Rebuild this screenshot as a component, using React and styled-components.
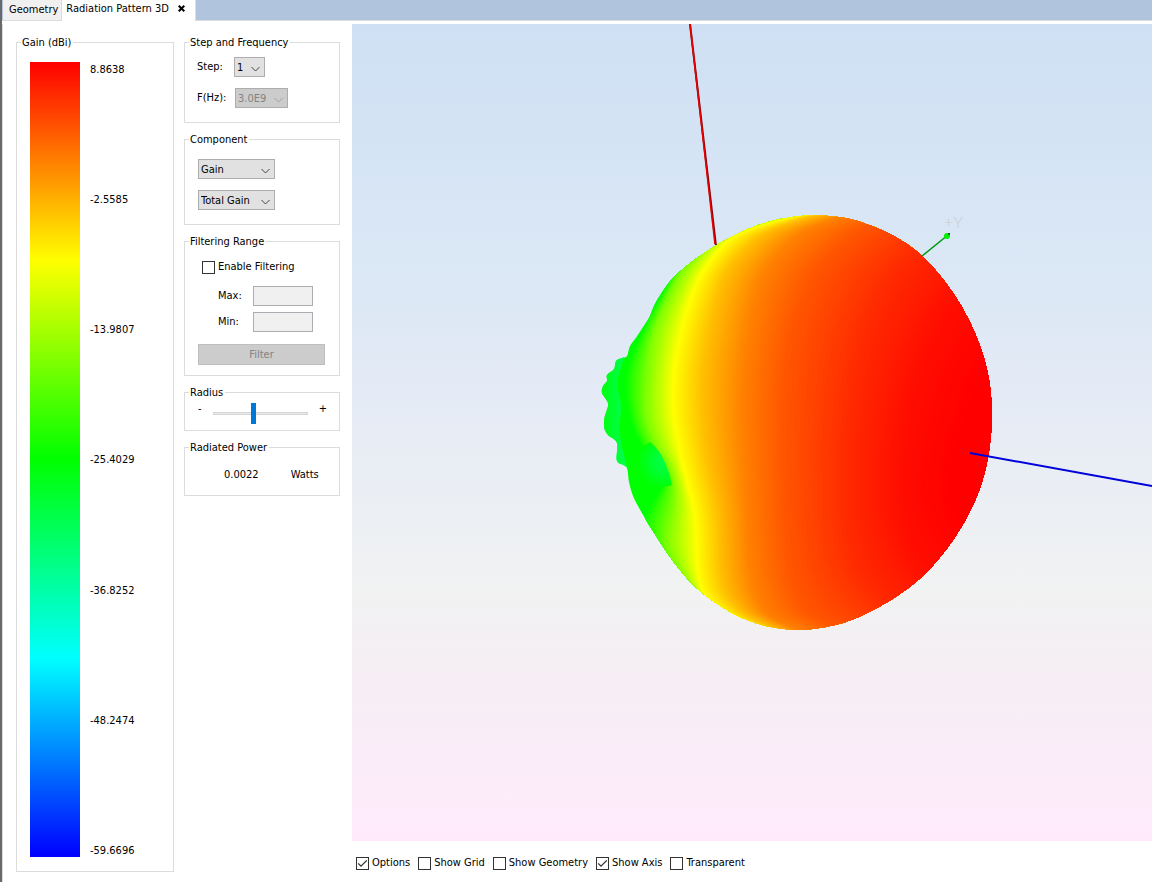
import React, { useState } from 'react';
import styled, { createGlobalStyle } from 'styled-components';

const GlobalStyle = createGlobalStyle`
* { box-sizing: border-box; }
body {
    margin: 0;
    background: #fff;
    color: #000;
}
body, button, input, select {
    font-family: "DejaVu Sans Condensed", "DejaVu Sans", Tahoma, sans-serif;
    font-stretch: condensed;
    font-size: 11px;
    line-height: 16px;
}
`;

const Window = styled.div`
display: flex;
flex-direction: column;
min-height: 100vh;
border-left: 2px solid #696969;
`;
const TabBar = styled.div`
display: flex;
height: 21px;
padding-left: 1px;
background: #b0c4de;
border-bottom: 1px solid #dcdcdc;
`;
const Tab = styled.button`
display: flex;
align-items: center;
gap: 9px;
height: ${props => props.$active ? '21px' : '20px'};
padding: ${props => props.$active ? '0 10px 4px 4px' : '0 3px 1px 6px'};
border: 0;
border-right: 1px solid #dcdcdc;
background: ${props => props.$active ? '#fff' : '#f0f0f0'};
color: #000;
white-space: nowrap;
`;
const Main = styled.main`
display: grid;
grid-template-columns: 158px 166px 1fr;
flex: 1;
padding-left: 13px;
border-left: 1px solid #dcdcdc;
margin-top: 3px;
`;
const Column = styled.div`
display: flex;
flex-direction: column;
gap: 9px;
padding: 11px 0 10px;
margin-left: ${props => props.$indent || 0}px;
`;

const Group = styled.fieldset`
display: flex;
flex-direction: column;
min-width: 0;
margin: 0;
padding: 0 12px;
border: 1px solid #dcdcdc;
flex: ${props => props.$grow ? 1 : 'none'};
`;
const GroupTitle = styled.legend`
height: 14px;
margin-left: -8px;
padding: 0 2px 0 1px;
white-space: nowrap;
`;
const Stack = styled.div`
display: flex;
flex-direction: column;
align-items: flex-start;
gap: ${props => props.$gap}px;
padding: ${props => props.$pad};
`;

const Scale = styled.div`
display: flex;
flex: 1;
height: 100%;
gap: 10px;
padding: 13px 0 14px;
`;
const ScaleBar = styled.div`
width: 50px;
margin-left: 1px;
background: linear-gradient(#f00, #ff0 25%, #0f0 50%, #0ff 75%, #00f);
`;
const ScaleLabels = styled.div`
display: flex;
flex-direction: column;
justify-content: space-between;
margin-bottom: -2px;
`;

const Field = styled.label`
display: grid;
grid-template-columns: ${props => props.$label || 37}px auto;
align-items: center;
`;
const SelectBox = styled.span`
display: inline-grid;
width: ${props => props.$width}px;
height: 20px;
align-items: center;
> * {
    grid-area: 1 / 1;
}
svg {
    justify-self: end;
    margin: 3px 5px 0 0;
    pointer-events: none;
}
`;
const NativeSelect = styled.select`
appearance: none;
width: 100%;
height: 20px;
padding: 1px 0 0 2px;
border: 1px solid #adadad;
border-radius: 0;
background: #e1e1e1;
color: #000;
&:disabled {
    background: #ccc;
    color: #838383;
    opacity: 1;
}
`;
const TextBox = styled.input`
width: 60px;
height: 20px;
padding: 0 3px;
border: 1px solid #abadb3;
background: #f0f0f0;
`;
const FilterButton = styled.button`
width: 127px;
height: 21px;
padding: 0;
border: 1px solid #bfbfbf;
background: #ccc;
color: #838383;
`;

const CheckLabel = styled.label`
display: inline-flex;
align-items: center;
gap: 3px;
height: 14px;
white-space: nowrap;
`;
const CheckBox = styled.span`
display: grid;
place-items: center;
width: 13px;
height: 13px;
> * {
    grid-area: 1 / 1;
}
svg {
    pointer-events: none;
}
`;
const NativeCheck = styled.input`
appearance: none;
width: 13px;
height: 13px;
margin: 0;
border: 1px solid #333;
background: #fff;
`;

const SliderRow = styled.div`
display: flex;
align-items: flex-start;
justify-content: space-between;
height: 31px;
padding: 2px 0 0 1px;
`;
const Slider = styled.input`
appearance: none;
width: 95px;
height: 21px;
margin: 2px 0 0;
background: transparent;
&::-webkit-slider-runnable-track {
    height: 3px;
    border: 1px solid #d6d6d6;
    background: #e7eaea;
}
&::-webkit-slider-thumb {
    appearance: none;
    width: 5px;
    height: 21px;
    margin-top: -10px;
    background: #0078d7;
}
`;
const PowerRow = styled.div`
display: flex;
gap: 32px;
padding: 13px 0 12px 27px;
`;

const ViewColumn = styled.section`
display: flex;
flex-direction: column;
margin-left: 12px;
min-width: 0;
`;
const Viewport = styled.div`
display: flex;
flex: 1;
min-height: 400px;
background: linear-gradient(#cfe0f4, #dce8f5 33%, #e3eaf6 43%, #f1f2f2 69%, #f4eff3 77%, #ffeafc);
svg {
    flex: 1;
    width: 100%;
    min-width: 0;
}
`;
const OptionsBar = styled.div`
display: flex;
align-items: center;
gap: 8px;
height: 41px;
padding: 3px 4px 0;
`;

function Chevron({ disabled }) {
    return (
        <svg width="9" height="6" viewBox="0 0 9 6" fill="none" stroke={disabled ? '#a0a0a0' : '#444'}>
            <path d="M.5 1 4.5 5 8.5 1" />
        </svg>
    );
}

function Select({ options, width, ...rest }) {
    return (
        <SelectBox $width={width}>
            <NativeSelect {...rest}>
                {options.map(o => <option key={o}>{o}</option>)}
            </NativeSelect>
            <Chevron disabled={rest.disabled} />
        </SelectBox>
    );
}

function Check({ label, initial = false }) {
    const [on, setOn] = useState(initial);
    return (
        <CheckLabel>
            <CheckBox>
                <NativeCheck type="checkbox" checked={on} onChange={e => setOn(e.target.checked)} />
                {on && (
                    <svg width="11" height="11" viewBox="0 0 11 11" fill="none" stroke="#333" strokeWidth="1.3">
                        <path d="M1.2 5.4 4 8.2 9.8 2.4" />
                    </svg>
                )}
            </CheckBox>
            {label}
        </CheckLabel>
    );
}

// outline of the lobe in scene units
const OUTLINE = [
    [444.7, 192.6], [421, 196.7], [401, 203], [382, 211.5], [363, 222], [345, 234], [331, 245],
    [319.7, 255.5], [309.7, 268.5], [302, 281.5], [297.3, 293.5], [291, 303], [284.5, 313], [278, 322],
    [275, 332], [270, 334], [264, 337], [262, 345], [255, 351], [255, 357], [251, 362], [250, 369],
    [255, 377], [256, 382], [252.5, 394], [252.3, 404], [256, 411], [265, 419], [265, 437],
    [274.5, 443.3], [277, 458], [281.3, 472.7], [288.5, 486.5], [298, 502.5], [309, 519.5],
    [321.5, 537.8], [334.5, 553.7], [348.5, 567.3], [366, 580.5], [385, 591.5], [405, 599.5],
    [425, 604], [445, 605.7], [463, 604.8], [482, 601.3], [501.3, 595.2], [521.3, 586],
    [542, 574], [562, 559.5], [580.5, 542], [598, 520.3], [613, 496.7], [624, 474.3], [631.5, 452.7],
    [636.3, 431.5], [639, 410], [640, 392], [639, 373], [637, 356], [633, 338], [627.5, 320.5],
    [619.7, 302], [609.7, 282.7], [597.5, 264], [584, 246.8], [570, 232], [556, 220.7], [539, 210.5],
    [520, 202], [500, 195.5], [480, 192.3], [462, 191.8],
];

// x of each iso-gain line at the heights in ROWS, keyed by hue
const ROWS = [190, 200, 215, 245, 275, 310, 350, 390, 420, 440, 460, 480, 500, 520, 545, 570, 590, 606];
const CONTOURS = [
    [120, [370, 360, 345, 323, 306, 288, 273, 276, 288, 307, 310, 298, 290, 296, 311, 330, 350, 380]],
    [90, [425, 392, 360, 331, 315, 301, 295, 294, 303, 315, 321, 321, 317, 315, 325, 342, 362, 392]],
    [60, [455, 414, 378, 352, 338, 328, 321, 321, 326, 330, 335, 340, 343, 344, 345, 352, 375, 410]],
    [45, [468, 434, 403, 376, 364, 356, 350, 350, 353, 356, 360, 364, 366, 367, 368, 374, 392, 425]],
    [30, [500, 468, 441, 415, 403, 396, 391, 390, 391, 392, 393, 394, 395, 396, 398, 404, 415, 445]],
    [20, [560, 522, 495, 464, 449, 438, 432, 430, 430, 430, 431, 431, 432, 434, 437, 444, 458, 490]],
    [10, [620, 600, 575, 542, 523, 509, 500, 495, 492, 492, 492, 492, 493, 496, 503, 520, 545, 575]],
    [3, [700, 680, 660, 630, 604, 582, 565, 555, 551, 549, 548, 549, 552, 559, 574, 600, 625, 650]],
    [0, [760, 745, 730, 710, 690, 655, 628, 614, 604, 600, 597, 600, 610, 625, 650, 680, 705, 720]],
];

function spline(points, closed) {
    const n = points.length;
    const at = i => closed ? points[(i + n) % n] : points[Math.max(0, Math.min(n - 1, i))];
    let d = '';
    for (let i = 0; i < (closed ? n : n - 1); i++) {
        const [a, b, c, e] = [at(i - 1), at(i), at(i + 1), at(i + 2)];
        d += `C${b[0] + (c[0] - a[0]) / 6} ${b[1] + (c[1] - a[1]) / 6} ${c[0] - (e[0] - b[0]) / 6} ${c[1] - (e[1] - b[1]) / 6} ${c[0]} ${c[1]}`;
    }
    return `M${points[0].join(' ')}${d}`;
}

function hueColor(h) {
    return h > 60
        ? `rgb(${Math.round((120 - h) * 4.25)},255,0)`
        : `rgb(255,${Math.round(h * 4.25)},0)`;
}

const BANDS = CONTOURS.slice(1).flatMap(([hue, xs], k) => {
    const [prevHue, prevXs] = CONTOURS[k];
    const steps = prevHue - hue > 12 ? 24 : 14;
    return Array.from({ length: steps }, (_, s) => {
        const t = (s + 1) / steps;
        const line = xs.map((x, i) => [prevXs[i] + (x - prevXs[i]) * t, ROWS[i]]);
        return { d: `${spline(line)}H800V190Z`, fill: hueColor(prevHue + (hue - prevHue) * t) };
    });
});

function RadiationPattern() {
    return (
        <svg viewBox="0 0 800 817" preserveAspectRatio="xMidYMid slice" role="img" aria-label="3D radiation pattern">
            <defs>
                <clipPath id="lobe"><path d={`${spline(OUTLINE, true)}Z`} /></clipPath>
                <linearGradient id="back" gradientUnits="userSpaceOnUse" x1="252" y1="0" x2="270" y2="0">
                    <stop offset="0" stopColor="#00ff14" />
                    <stop offset="1" stopColor="#00ff46" />
                </linearGradient>
                <radialGradient id="dip" gradientUnits="userSpaceOnUse" cx="312" cy="438" r="27">
                    <stop offset="0" stopColor="#00ff46" />
                    <stop offset=".35" stopColor="#00ff38" />
                    <stop offset="1" stopColor="#00ff00" />
                </radialGradient>
            </defs>
            <path d="M338 0 364 222" stroke="#7a0000" strokeWidth="2" />
            <path d="M338 0 363 220" stroke="#e80000" strokeWidth="1.6" />
            <path d="M570 232 596 211" stroke="#009a14" strokeWidth="1.6" />
            <circle cx="595" cy="212" r="3" fill="#00f000" />
            <path d="M596 210h2" stroke="#063" strokeWidth="2" />
            <text x="592" y="204" fill="#c8cbce" fontSize="16" fontFamily="Lato, sans-serif" fontWeight="300">+Y</text>
            <g clipPath="url(#lobe)">
                <rect x="240" y="190" width="410" height="420" fill="#0f0" />
                {BANDS.map((b, i) => <path key={i} d={b.d} fill={b.fill} />)}
                <path d="M240 320H276L268 347Q264 358 266 366C269 376 270 384 268 396C266 408 270 424 275 443L240 450Z" fill="url(#back)" />
                <path d="M298 418Q308 426 313 439Q318 450 320 461Q305 466 296 462Q286 450 288 425Z" fill="url(#dip)" />
            </g>
            <path d="M618 429 800 462" stroke="#0000d8" strokeWidth="2" />
        </svg>
    );
}

const GAIN_TICKS = ['8.8638', '-2.5585', '-13.9807', '-25.4029', '-36.8252', '-48.2474', '-59.6696'];

export default function App() {
    const [radius, setRadius] = useState(43);

    return (
        <Window>
            <GlobalStyle />
            <TabBar role="tablist">
                <Tab role="tab" aria-selected="false">Geometry</Tab>
                <Tab role="tab" aria-selected="true" $active>
                    Radiation Pattern 3D
                    <svg width="7" height="7" viewBox="0 0 7 7" stroke="#000" strokeWidth="2">
                        <path d="M.7.7 6.3 6.3M6.3.7.7 6.3" />
                    </svg>
                </Tab>
            </TabBar>
            <Main>
                <Column>
                    <Group $grow>
                        <GroupTitle>Gain (dBi)</GroupTitle>
                        <Scale>
                            <ScaleBar />
                            <ScaleLabels>
                                {GAIN_TICKS.map(t => <span key={t}>{t}</span>)}
                            </ScaleLabels>
                        </Scale>
                    </Group>
                </Column>

                <Column $indent={10}>
                    <Group>
                        <GroupTitle>Step and Frequency</GroupTitle>
                        <Stack $gap={11} $pad="8px 0 14px">
                            <Field>Step:<Select width={31} options={['1']} /></Field>
                            <Field $label={38}>F(Hz):<Select width={53} options={['3.0E9']} disabled /></Field>
                        </Stack>
                    </Group>
                    <Group>
                        <GroupTitle>Component</GroupTitle>
                        <Stack $gap={11} $pad="13px 1px 14px">
                            <Select width={77} options={['Gain']} aria-label="Component" />
                            <Select width={77} options={['Total Gain']} aria-label="Gain type" />
                        </Stack>
                    </Group>
                    <Group>
                        <GroupTitle>Filtering Range</GroupTitle>
                        <Stack $gap={12} $pad="12px 1px 10px">
                            <Stack $gap={6} $pad="0 4px">
                                <Stack $gap={0} $pad="0 0 6px"><Check label="Enable Filtering" /></Stack>
                                <Stack $gap={6} $pad="0 0 0 16px">
                                    <Field $label={35}>Max:<TextBox disabled /></Field>
                                    <Field $label={35}>Min:<TextBox disabled /></Field>
                                </Stack>
                            </Stack>
                            <FilterButton disabled>Filter</FilterButton>
                        </Stack>
                    </Group>
                    <Group>
                        <GroupTitle>Radius</GroupTitle>
                        <SliderRow>
                            <span>-</span>
                            <Slider
                                type="range"
                                aria-label="Radius"
                                value={radius}
                                onChange={e => setRadius(e.target.value)}
                            />
                            <span>+</span>
                        </SliderRow>
                    </Group>
                    <Group>
                        <GroupTitle>Radiated Power</GroupTitle>
                        <PowerRow>
                            <span>0.0022</span>
                            <span>Watts</span>
                        </PowerRow>
                    </Group>
                </Column>

                <ViewColumn>
                    <Viewport><RadiationPattern /></Viewport>
                    <OptionsBar>
                        <Check label="Options" initial />
                        <Check label="Show Grid" />
                        <Check label="Show Geometry" />
                        <Check label="Show Axis" initial />
                        <Check label="Transparent" />
                    </OptionsBar>
                </ViewColumn>
            </Main>
        </Window>
    );
}
